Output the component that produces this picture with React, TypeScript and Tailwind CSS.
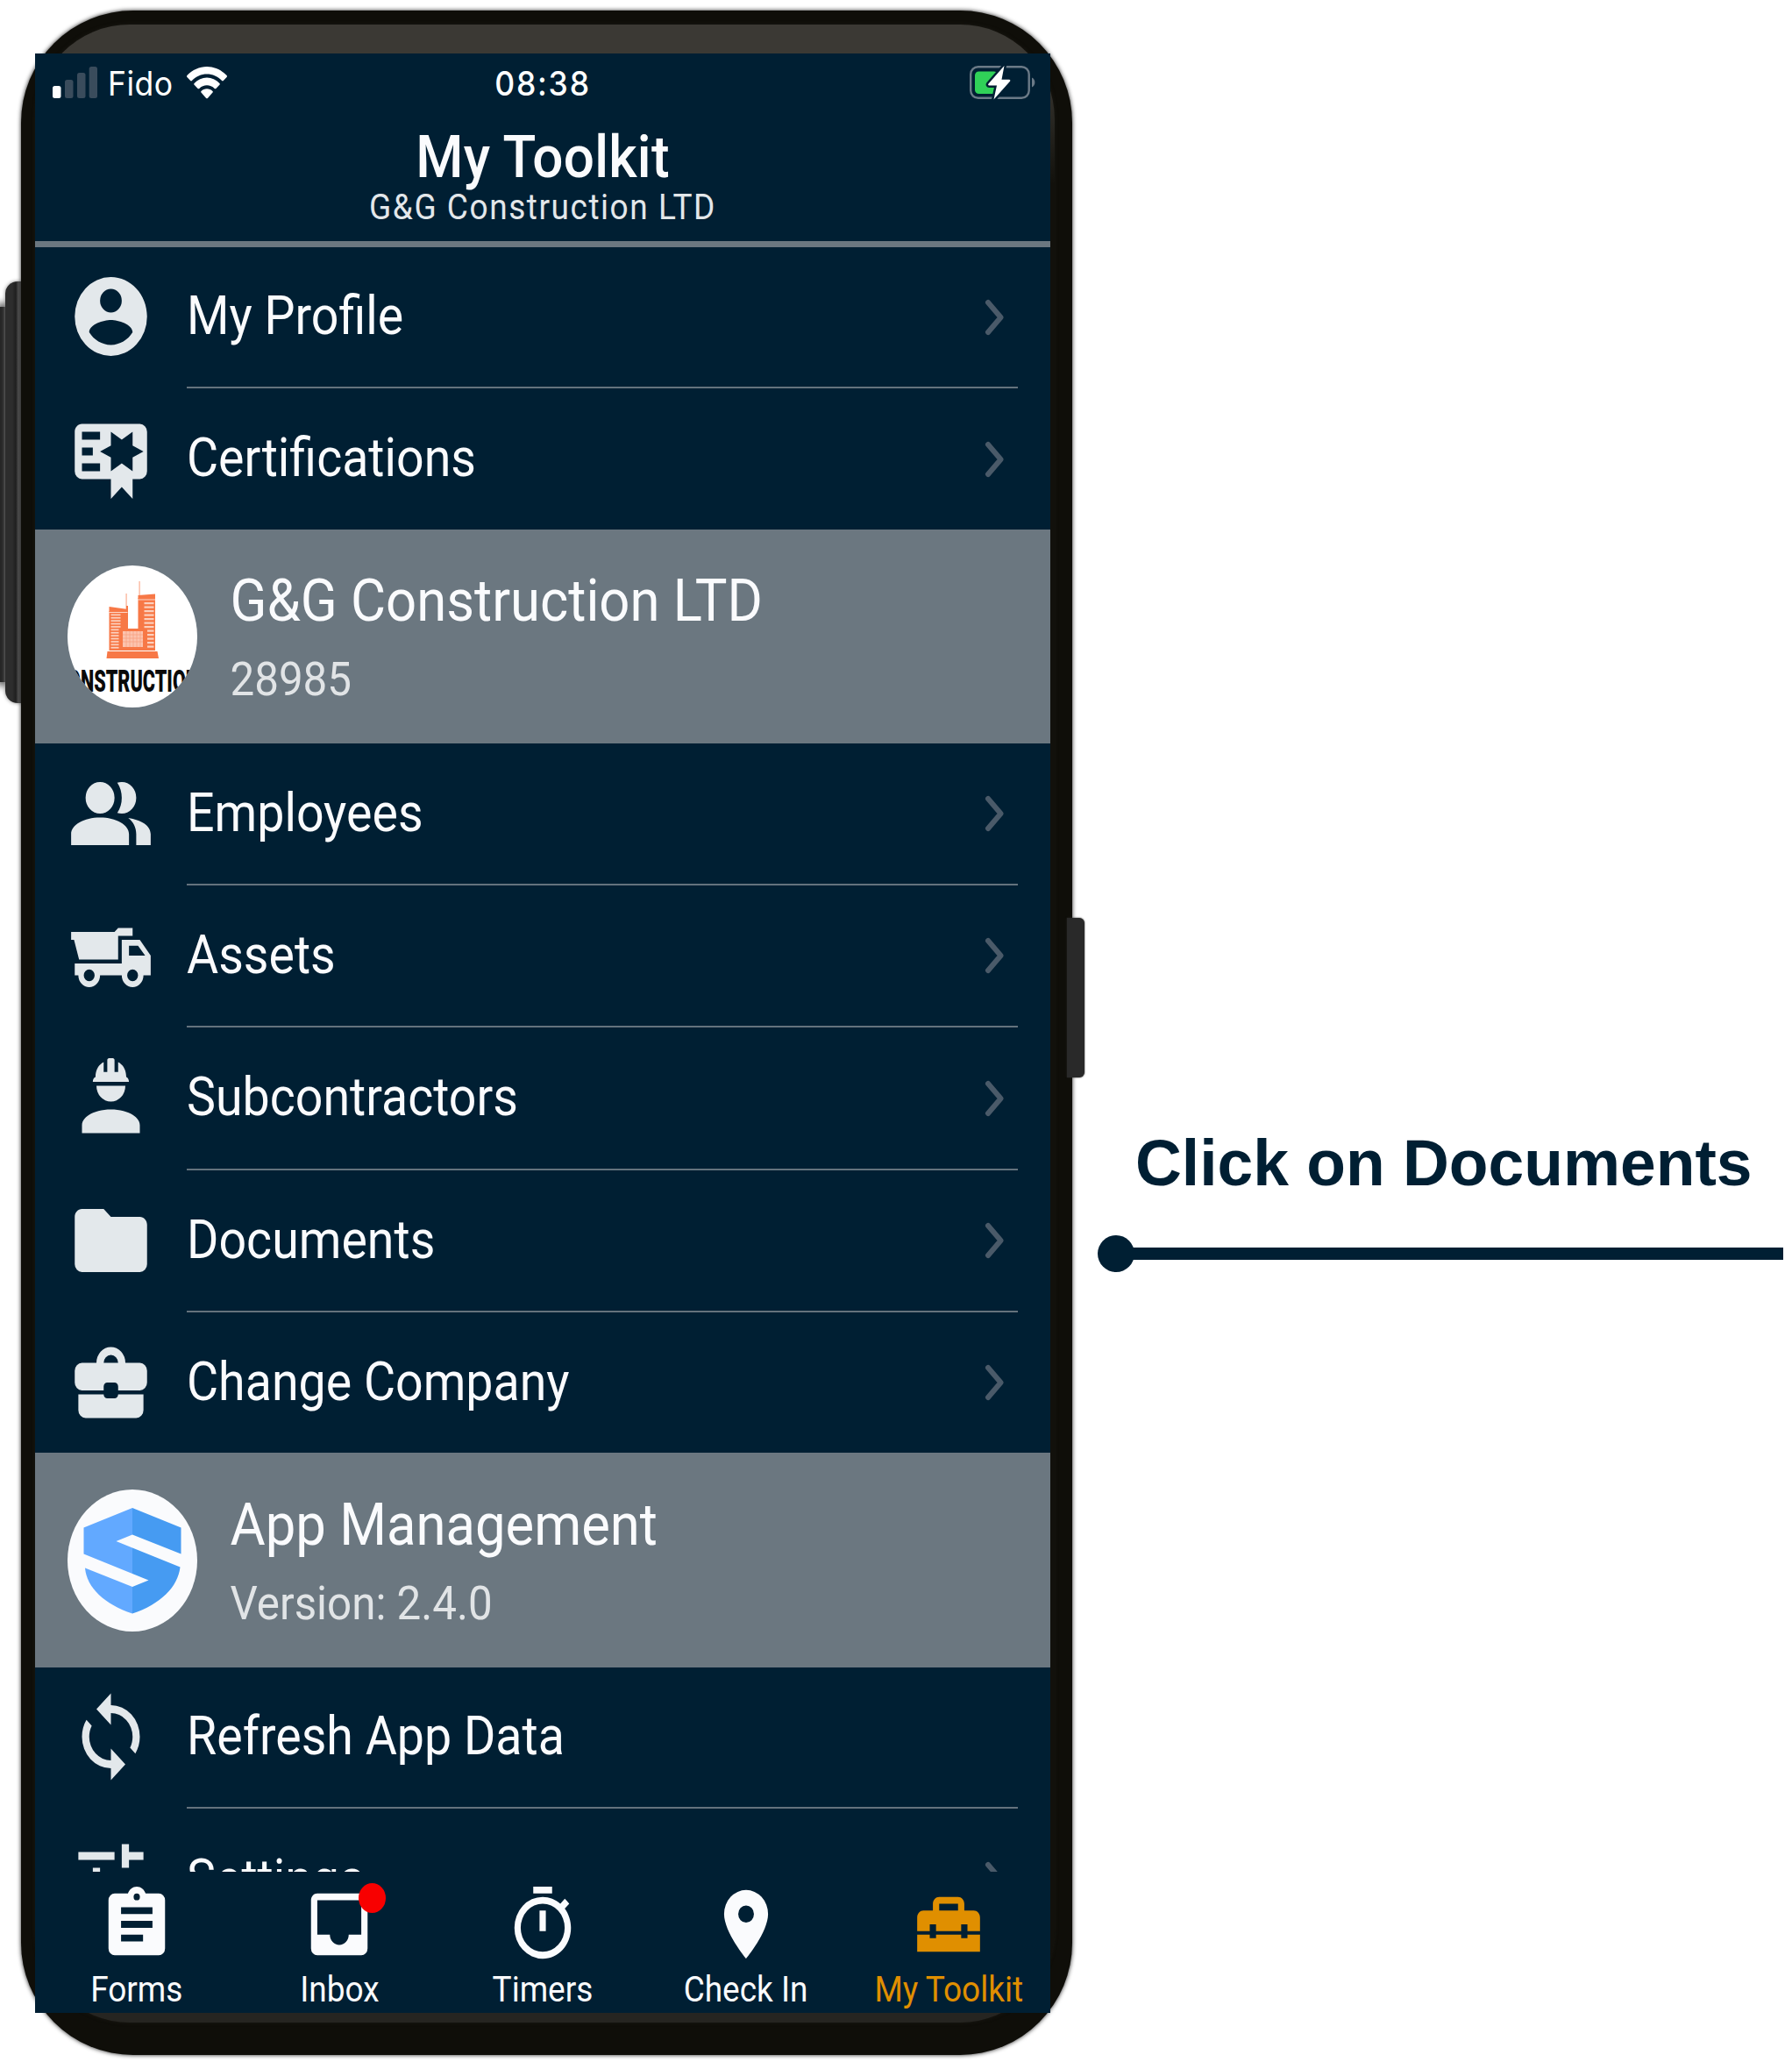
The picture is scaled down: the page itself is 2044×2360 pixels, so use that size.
import React from "react";
import { clsx } from "clsx";

type Item = {
  label: string;
  icon: string;
  height: string;
  arrow?: boolean;
  divider?: boolean;
};

const icons = {
  profile:
    "M12,19.2C9.5,19.2 7.29,17.92 6,16C6.03,14 10,12.9 12,12.9C14,12.9 17.97,14 18,16C16.71,17.92 14.5,19.2 12,19.2M12,5A3,3 0 0,1 15,8A3,3 0 0,1 12,11A3,3 0 0,1 9,8A3,3 0 0,1 12,5M12,2A10,10 0 0,0 2,12A10,10 0 0,0 12,22A10,10 0 0,0 22,12C22,6.47 17.5,2 12,2Z",
  certificate:
    "M4,3C2.89,3 2,3.89 2,5V15A2,2 0 0,0 4,17H12V22L15,19L18,22V17H20A2,2 0 0,0 22,15V5A2,2 0 0,0 20,3H4M12,5L15,7L18,5V8.5L21,10L18,11.5V15L15,13L12,15V11.5L9,10L12,8.5V5M4,5H9V7H4V5M4,9H7V11H4V9M4,13H9V15H4V13Z",
  employees:
    "M9,4A4,4 0 0,1 13,8A4,4 0 0,1 9,12A4,4 0 0,1 5,8A4,4 0 0,1 9,4M1,20V17.2C1,14.8 4.6,13 9,13C13.4,13 17,14.8 17,17.2V20H1M13.76,4.15C14.16,4.06 14.58,4 15,4A4,4 0 0,1 19,8A4,4 0 0,1 15,12C14.58,12 14.16,11.94 13.76,11.85C14.6,10.7 15,9.4 15,8C15,6.6 14.6,5.3 13.76,4.15M16.8,13.1C20.3,13.6 23,15 23,17.2V20H19V17.2C19,15.5 18.2,14.1 16.8,13.1Z",
  truck:
    "M1,6V8H1.8L3.2,13H14V7H18V5H14L13,6H1M15,8V14H2V17H3A3,3 0 0,0 6,20A3,3 0 0,0 9,17H15A3,3 0 0,0 18,20A3,3 0 0,0 21,17H23V12L20,8H15M17,9.5H19.5L21.47,12H17V9.5M6,15.5A1.5,1.5 0 0,1 7.5,17A1.5,1.5 0 0,1 6,18.5A1.5,1.5 0 0,1 4.5,17A1.5,1.5 0 0,1 6,15.5M18,15.5A1.5,1.5 0 0,1 19.5,17A1.5,1.5 0 0,1 18,18.5A1.5,1.5 0 0,1 16.5,17A1.5,1.5 0 0,1 18,15.5Z",
  hardHat:
    "M12,15C7.58,15 4,16.79 4,19V21H20V19C20,16.79 16.42,15 12,15M8,9A4,4 0 0,0 12,13A4,4 0 0,0 16,9M11.5,2C11.2,2 11,2.21 11,2.5V5.5H10V3C10,3 7.75,3.86 7.75,6.75C7.75,6.75 7,6.89 7,8H17C16.95,6.89 16.25,6.75 16.25,6.75C16.25,3.86 14,3 14,3V5.5H13V2.5C13,2.21 12.81,2 12.5,2H11.5Z",
  folder:
    "M10,4H4C2.89,4 2,4.89 2,6V18A2,2 0 0,0 4,20H20A2,2 0 0,0 22,18V8C22,6.89 21.1,6 20,6H12L10,4Z",
  briefcase:
    "M12,3A4,4 0 0,1 16,7H20A2,2 0 0,1 22,9V12A2,2 0 0,1 20,14H14V13A1,1 0 0,0 13,12H11A1,1 0 0,0 10,13V14H4A2,2 0 0,1 2,12V9A2,2 0 0,1 4,7H8A4,4 0 0,1 12,3M12,5A2,2 0 0,0 10,7H14A2,2 0 0,0 12,5M3,15V19A2,2 0 0,0 5,21H19A2,2 0 0,0 21,19V15H14A1,1 0 0,1 13,16H11A1,1 0 0,1 10,15H3Z",
  sync: "M12,18A6,6 0 0,1 6,12C6,11 6.25,10.03 6.7,9.2L5.24,7.74C4.46,8.97 4,10.43 4,12A8,8 0 0,0 12,20V23L16,19L12,15M12,4V1L8,5L12,9V6A6,6 0 0,1 18,12C18,13 17.75,13.97 17.3,14.8L18.76,16.26C19.54,15.03 20,13.57 20,12A8,8 0 0,0 12,4Z",
  tune: "M3,17V19H9V17H3M3,5V7H13V5H3M13,21V19H21V17H13V15H11V21H13M7,9V11H3V13H7V15H9V9H7M21,13V11H11V13H21M15,9H17V7H21V5H17V3H15V9Z",
  clipboard:
    "M14,17H7V15H14M17,13H7V11H17M17,9H7V7H17M12,3A1,1 0 0,1 13,4A1,1 0 0,1 12,5A1,1 0 0,1 11,4A1,1 0 0,1 12,3M19,3H14.82C14.4,1.84 13.3,1 12,1C10.7,1 9.6,1.84 9.18,3H5A2,2 0 0,0 3,5V19A2,2 0 0,0 5,21H19A2,2 0 0,0 21,19V5A2,2 0 0,0 19,3Z",
  inbox:
    "M19,15H15A3,3 0 0,1 12,18A3,3 0 0,1 9,15H5V5H19M19,3H5C3.89,3 3,3.9 3,5V19A2,2 0 0,0 5,21H19A2,2 0 0,0 21,19V5A2,2 0 0,0 19,3Z",
  timer:
    "M12,20A7,7 0 0,1 5,13A7,7 0 0,1 12,6A7,7 0 0,1 19,13A7,7 0 0,1 12,20M19.03,7.39L20.45,5.97C20,5.46 19.55,5 19.04,4.56L17.62,6C16.07,4.74 14.12,4 12,4A9,9 0 0,0 3,13A9,9 0 0,0 12,22C17,22 21,17.97 21,13C21,10.88 20.26,8.93 19.03,7.39M11,14H13V8H11M15,1H9V3H15V1Z",
  pin: "M12,11.5A2.5,2.5 0 0,1 9.5,9A2.5,2.5 0 0,1 12,6.5A2.5,2.5 0 0,1 14.5,9A2.5,2.5 0 0,1 12,11.5M12,2A7,7 0 0,0 5,9C5,14.25 12,22 12,22C12,22 19,14.25 19,9A7,7 0 0,0 12,2Z",
  toolbox:
    "M18 16H16V15H8V16H6V15H2V20H22V15H18V16M20 8H17V6C17 4.9 16.1 4 15 4H9C7.9 4 7 4.9 7 6V8H4C2.9 8 2 8.9 2 10V14H6V12H8V14H16V12H18V14H22V10C22 8.9 21.1 8 20 8M15 8H9V6H15V8Z",
};

const personal: Item[] = [
  { label: "My Profile", icon: icons.profile, height: "h-[161px]", arrow: true, divider: true },
  { label: "Certifications", icon: icons.certificate, height: "h-[161px]", arrow: true },
];

const company: Item[] = [
  { label: "Employees", icon: icons.employees, height: "h-[162px]", arrow: true, divider: true },
  { label: "Assets", icon: icons.truck, height: "h-[162px]", arrow: true, divider: true },
  { label: "Subcontractors", icon: icons.hardHat, height: "h-[163px]", arrow: true, divider: true },
  { label: "Documents", icon: icons.folder, height: "h-[162px]", arrow: true, divider: true },
  { label: "Change Company", icon: icons.briefcase, height: "h-[160px]", arrow: true },
];

const management: Item[] = [
  { label: "Refresh App Data", icon: icons.sync, height: "h-[161px]", divider: true },
  { label: "Settings", icon: icons.tune, height: "h-[162px]", arrow: true },
];

const tabs = [
  { label: "Forms", icon: icons.clipboard },
  { label: "Inbox", icon: icons.inbox, badge: true },
  { label: "Timers", icon: icons.timer },
  { label: "Check In", icon: icons.pin },
  { label: "My Toolkit", icon: icons.toolbox, active: true },
];

// The screen is a little taller than the phone's native ratio, so text is stretched with it.
function Text({ className, children }: { className?: string; children: React.ReactNode }) {
  return (
    <span className={clsx("block whitespace-nowrap scale-y-[1.085]", className)}>
      {children}
    </span>
  );
}

function Icon({ path, className }: { path: string; className?: string }) {
  return (
    <svg
      viewBox="0 0 24 24"
      preserveAspectRatio="none"
      fill="currentColor"
      fillRule="evenodd"
      className={clsx("shrink-0", className)}
    >
      <path d={path} />
    </svg>
  );
}

function StatusBar() {
  return (
    <div className="grid h-[69px] grid-cols-3 items-center font-[Inter,sans-serif] text-white">
      <div className="flex items-center pl-5">
        <svg width="51" height="36" viewBox="0 0 51 36" className="mb-[3px]">
          <rect x="0" y="22" width="9.5" height="14" rx="2.5" fill="#fff" />
          <rect x="14" y="15" width="9.5" height="21" rx="2.5" fill="#3a4c5c" />
          <rect x="28" y="7" width="9.5" height="29" rx="2.5" fill="#3a4c5c" />
          <rect x="41.7" y="0" width="9.3" height="36" rx="2.5" fill="#3a4c5c" />
        </svg>
        <Text className="ml-[12px] text-[35.5px] tracking-[0.5px]">Fido</Text>
        <svg width="46" height="37" viewBox="0 0 46 37" className="mb-[2px] ml-[15px]">
          <path
            d="M23,0C31.5,0 39.6,3.7 45.6,10.1C46.1,10.6 46.1,11.4 45.6,11.9L41.8,16C41.3,16.5 40.6,16.5 40.1,16C35.4,11.2 29.4,8.6 23,8.6C16.6,8.6 10.6,11.2 5.9,16C5.4,16.5 4.7,16.5 4.2,16L0.4,11.9C-0.1,11.4 -0.1,10.6 0.4,10.1C6.4,3.7 14.5,0 23,0Z"
            fill="#fff"
          />
          <path
            d="M23,12.6C28.4,12.6 33.5,14.9 37.4,18.9C37.9,19.4 37.9,20.2 37.4,20.7L33.4,24.9C32.9,25.4 32.2,25.4 31.7,24.9C29.3,22.5 26.2,21.2 23,21.2C19.8,21.2 16.7,22.5 14.3,24.9C13.8,25.4 13.1,25.4 12.6,24.9L8.6,20.7C8.1,20.2 8.1,19.4 8.6,18.9C12.5,14.9 17.6,12.6 23,12.6Z"
            fill="#fff"
          />
          <path
            d="M23,25.2C25.5,25.2 27.8,26.2 29.5,27.9C30,28.4 30,29.1 29.5,29.6L23.9,35.9C23.4,36.5 22.6,36.5 22.1,35.9L16.5,29.6C16,29.1 16,28.4 16.5,27.9C18.2,26.2 20.5,25.2 23,25.2Z"
            fill="#fff"
          />
        </svg>
      </div>
      <Text className="text-center text-[35.5px] font-medium tracking-[1.8px]">08:38</Text>
      <div className="flex justify-end pr-[17px]">
        <svg width="75" height="40" viewBox="0 0 75 40" className="mb-[3px]">
          <rect x="1.2" y="2.2" width="66.5" height="35.6" rx="8.5" fill="none" stroke="#6b7a87" strokeWidth="2.4" />
          <path d="M71,14.5C75.5,16.5 75.5,23.5 71,25.5Z" fill="#6b7a87" />
          <rect x="6" y="7.5" width="26" height="25.5" rx="4.5" fill="#30d158" />
          <path
            d="M39.5,1L21.5,21.5C20.7,22.5 21.2,23.5 22.4,23.5H31L27.5,39.5L46,18.8C46.8,17.8 46.3,16.8 45.1,16.8H36.5Z"
            fill="#fff"
            stroke="#001f33"
            strokeWidth="5"
            paintOrder="stroke"
          />
        </svg>
      </div>
    </div>
  );
}

function Header() {
  return (
    <header className="border-b-[7px] border-[#6b7780] pt-[15px] pb-[14px] text-center">
      <Text className="text-[62px] leading-[68px] font-medium tracking-[0.25px] text-[#fafbfd]">
        My Toolkit
      </Text>
      <Text className="text-[37px] leading-[48px] tracking-[1.55px] text-[#e3e7ea]">
        G&amp;G Construction LTD
      </Text>
    </header>
  );
}

function Row({ item }: { item: Item }) {
  return (
    <div className={clsx("flex pl-[37px]", item.height)}>
      <Icon
        path={item.icon}
        className={clsx(
          "h-[108px] w-[99px] self-center text-[#e3e8eb]",
          item.divider && "mb-[3px]"
        )}
      />
      <div
        className={clsx(
          "mr-[37px] ml-[37px] flex flex-1 items-center justify-between",
          item.divider && "border-b-2 border-[#64727d]"
        )}
      >
        <Text className="mb-px text-[55.5px] leading-[64px] text-[#fafbfd]">{item.label}</Text>
        {item.arrow && (
          <svg width="22" height="42" viewBox="0 0 22 42" className="mr-4">
            <path
              d="M4,4L18.5,21L4,38"
              fill="none"
              stroke="#4a5a69"
              strokeWidth="6"
              strokeLinecap="round"
              strokeLinejoin="round"
            />
          </svg>
        )}
      </div>
    </div>
  );
}

function Section({
  logo,
  title,
  subtitle,
  className,
}: {
  logo: React.ReactNode;
  title: string;
  subtitle: string;
  className: string;
}) {
  return (
    <div className={clsx("flex items-center bg-[#6b7780] pl-[37px]", className)}>
      {logo}
      <div className="ml-[37.5px] self-start pt-9">
        <Text className="text-[61.6px] leading-[90px] text-[#fafbfd]">{title}</Text>
        <Text className="text-[49.3px] leading-[90px] text-[#e1e4e6]">{subtitle}</Text>
      </div>
    </div>
  );
}

function CompanyLogo() {
  const floors = Array.from({ length: 12 }, (_, i) => i);
  return (
    <svg width="148" height="162" viewBox="0 0 148 162">
      <defs>
        <clipPath id="avatar">
          <ellipse cx="74" cy="81" rx="74" ry="81" />
        </clipPath>
      </defs>
      <g clipPath="url(#avatar)">
        <rect width="148" height="162" fill="#fff" />
        <g fill="#f77847">
          <path d="M47.5,47L69,50V53H47.5Z" />
          <rect x="47.5" y="52" width="21" height="45" />
          <rect x="66.5" y="32" width="1.2" height="18" opacity=".6" />
          <rect x="67" y="46" width="2" height="30" />
          <path d="M80.5,34L100,32.5V38H80.5Z" />
          <rect x="80.5" y="37" width="19.5" height="60" />
          <rect x="81.5" y="18" width="1.2" height="16" opacity=".6" />
          <rect x="60" y="72" width="29" height="25" />
          <path d="M45.5,98H102.5L104,106H44.5Z" />
        </g>
        <g fill="#fff">
          <rect x="47.5" y="53" width="21" height="1" opacity=".7" />
          <rect x="80.5" y="38.5" width="19.5" height="1" opacity=".7" />
          <rect x="44.5" y="97" width="59" height="1" opacity=".7" />
        </g>
        <g fill="#fff" opacity=".65">
          {floors.map((i) => (
            <rect key={i} x="49.5" y={55.5 + i * 3.4} width={i < 5 ? 11 : 9} height="1.7" />
          ))}
          {floors.map((i) => (
            <rect key={i} x={i < 7 ? 87.5 : 91} y={42 + i * 4.5} width={i < 7 ? 11 : 7.5} height="2.2" />
          ))}
        </g>
        <rect x="63" y="75" width="23" height="18" fill="#fcc3ae" />
        <path
          d="M63,79H86M63,83H86M63,87H86M67,75V93M71,75V93M75,75V93M79,75V93M83,75V93"
          stroke="#f9a283"
          strokeWidth=".8"
        />
        <text
          transform="translate(0 143.5) scale(.62 1)"
          textLength="242"
          lengthAdjust="spacingAndGlyphs"
          className="font-[Roboto,sans-serif] text-[34.5px] font-black"
          fill="#0a0a0a"
        >
          ONSTRUCTION
        </text>
      </g>
    </svg>
  );
}

function AppLogo() {
  return (
    <svg width="148" height="162" viewBox="0 0 148 162">
      <ellipse cx="74" cy="81" rx="74" ry="81" fill="#fafbfd" />
      <path d="M74,21L18.5,43.5V73.5L74,96V66.5L55.5,59L74,51.5Z" fill="#62a9ff" />
      <path d="M74,21L129.5,43.5V73.5L74,51.5Z" fill="#469bf2" />
      <path
        d="M74,66.5L128.5,88.5C126,111 106,131 74,141.5V111L92.5,103.5L74,96Z"
        fill="#469bf2"
      />
      <path d="M20,89.5L74,111V141.5C42,131 22,112 20,89.5Z" fill="#62a9ff" />
    </svg>
  );
}

function TabBar() {
  return (
    <nav className="grid h-[161px] grid-cols-5">
      {tabs.map((tab) => (
        <div
          key={tab.label}
          className={clsx(
            "flex flex-col items-center pt-[13px]",
            tab.active ? "text-[#e08f00]" : "text-[#fafbfd]"
          )}
        >
          <div className="relative">
            <Icon path={tab.icon} className="h-[94px] w-[86px]" />
            {tab.badge && (
              <span className="absolute top-0 left-[65px] h-[34px] w-[31px] rounded-[50%] bg-[#f80000]" />
            )}
          </div>
          <Text className="text-[37px] leading-[55px]">{tab.label}</Text>
        </div>
      ))}
    </nav>
  );
}

function Screen() {
  return (
    <div className="relative flex h-[2235px] w-[1158px] flex-col bg-[#001f33] font-[Roboto,sans-serif]">
      <StatusBar />
      <Header />
      <div className="min-h-0 flex-1 overflow-hidden">
        {personal.map((item) => (
          <Row key={item.label} item={item} />
        ))}
        <Section
          logo={<CompanyLogo />}
          title="G&G Construction LTD"
          subtitle="28985"
          className="h-[244px]"
        />
        {company.map((item) => (
          <Row key={item.label} item={item} />
        ))}
        <Section
          logo={<AppLogo />}
          title="App Management"
          subtitle="Version: 2.4.0"
          className="h-[245px] pt-px"
        />
        {management.map((item) => (
          <Row key={item.label} item={item} />
        ))}
      </div>
      <TabBar />
    </div>
  );
}

function Phone() {
  return (
    <div className="relative h-[2360px] w-[1223px] shrink-0 pt-[12px] pl-6">
      {/* side buttons */}
      <div className="absolute top-[350px] left-0 h-[428px] w-[8px] bg-[#262626] shadow-[0_0_8px_4px_#5c5c5c]" />
      <div className="absolute top-[321px] left-[6px] h-[481px] w-[20px] rounded-l-[14px] bg-linear-to-r from-[#2d2d2d] from-40% via-[#1f1f1f] via-60% to-[#505050] to-75% shadow-[0_0_4px_#888]" />
      <div className="relative h-[2332px] w-[1199px] rounded-[128px] bg-[#0f0e09] pt-[49px] pl-4 shadow-[0_0_5px_#222]">
        <div className="absolute top-[16px] right-[20px] bottom-[37px] left-4 rounded-[108px] bg-[linear-gradient(#3b3934_2%,#12110c_8%,#12110c_97%,#262521_99%)] shadow-[0_0_4px_#1a1914]" />
        <Screen />
      </div>
      <div className="absolute top-[1047px] left-[1217px] h-[182px] w-[20px] rounded-r-[6px] bg-[#292929] shadow-[0_0_2px_#292929]" />
    </div>
  );
}

export default function App() {
  return (
    <div className="flex h-[2360px] w-[2044px] overflow-hidden bg-white">
      <Phone />
      <div className="mt-[1287px] ml-[29px] w-[782px] text-[#001f33]">
        <h1 className="pl-[43px] font-['Liberation_Sans',sans-serif] text-[73.2px] leading-[80px] font-bold whitespace-nowrap">
          Click on Documents
        </h1>
        <div className="mt-[42px] flex items-center">
          <span className="size-[42px] rounded-full bg-[#001f33]" />
          <span className="-ml-2 h-[14px] flex-1 bg-[#001f33]" />
        </div>
      </div>
    </div>
  );
}
